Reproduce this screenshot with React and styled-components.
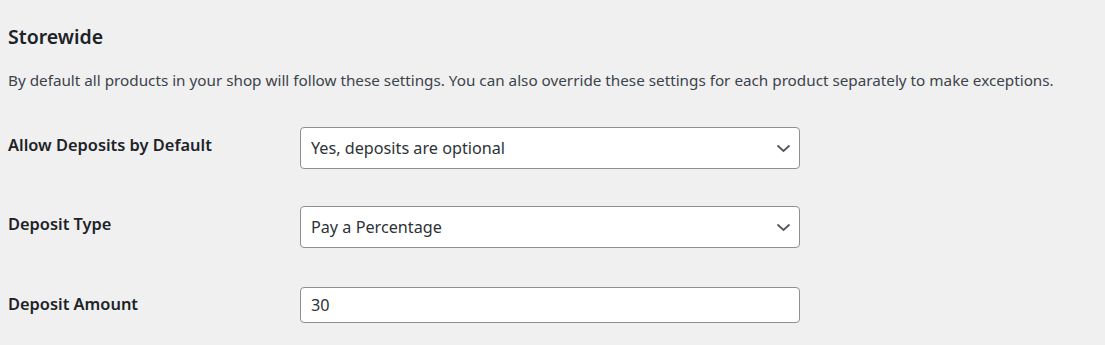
import React from 'react';
import styled, { createGlobalStyle } from 'styled-components';

const GlobalStyle = createGlobalStyle`
  html, body {
    margin: 0;
    padding: 0;
    background: #f0f0f1;
  }
  body {
    font-family: "Noto Sans", "Open Sans", sans-serif;
    color: #1d2327;
  }
`;

const Page = styled.div`
  padding: 0 8px;
`;

const Heading = styled.h2`
  margin: 0;
  padding-top: 25px;
  font-size: 19.5px;
  line-height: 24px;
  font-weight: 600;
  color: #1d2327;
`;

const Description = styled.p`
  margin: 21px 0 0;
  font-size: 15.25px;
  line-height: 20px;
  color: #3c434a;
  white-space: nowrap;
`;

const Form = styled.div`
  margin-top: 37px;
  display: flex;
  flex-direction: column;
`;

const Row = styled.div`
  display: grid;
  grid-template-columns: 292px 500px;
  align-items: start;
  height: 80px;

  &:first-child {
    height: 79px;
  }

  &:last-child {
    height: auto;
  }
`;

const Label = styled.label`
  padding-top: 8px;
  font-size: 16.4px;
  line-height: 20px;
  font-weight: 600;
  color: #1d2327;
`;

const Field = styled.div`
  position: relative;
  box-sizing: border-box;
  height: ${(p) => (p.$select ? 42 : 36)}px;
  margin-top: ${(p) => (p.$select ? 0 : 1)}px;
  background: #fff;
  border: 1px solid #8c8f94;
  border-radius: 4px;
  display: flex;
  align-items: center;
  padding: 0 10px;
  font-size: 16.2px;
  color: #2c3338;
`;

const Chevron = styled.svg`
  position: absolute;
  right: 8px;
  top: 50%;
  margin-top: -4px;
  width: 15px;
  height: 9px;
`;

const SelectField = ({ value }) => (
  <Field $select>
    {value}
    <Chevron viewBox="0 0 15 9">
      <polyline points="1.5,1.5 7.5,7 13.5,1.5" fill="none" stroke="#50575e" strokeWidth="1.8" />
    </Chevron>
  </Field>
);

export default function App() {
  return (
    <Page>
      <GlobalStyle />
      <Heading>Storewide</Heading>
      <Description>
        By default all products in your shop will follow these settings. You can also override these settings for each product separately to make exceptions.
      </Description>
      <Form>
        <Row>
          <Label>Allow Deposits by Default</Label>
          <SelectField value="Yes, deposits are optional" />
        </Row>
        <Row>
          <Label>Deposit Type</Label>
          <SelectField value="Pay a Percentage" />
        </Row>
        <Row>
          <Label>Deposit Amount</Label>
          <Field>30</Field>
        </Row>
      </Form>
    </Page>
  );
}
